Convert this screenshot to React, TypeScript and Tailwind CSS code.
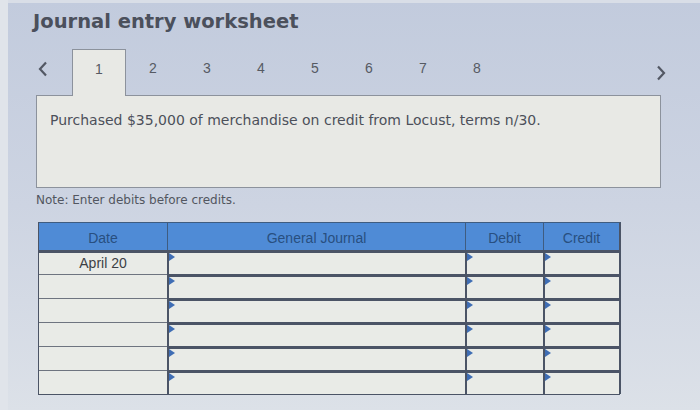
import React from "react";

const tabs = [1, 2, 3, 4, 5, 6, 7, 8];
const rows = ["April 20", "", "", "", "", ""];

function Flag() {
  return (
    <span className="absolute left-0 top-0 w-0 h-0 border-y-[4px] border-y-transparent border-l-[6px] border-l-[#3f6db4]" />
  );
}

function InputCell({ last }: { last?: boolean }) {
  return (
    <div
      className={`relative h-[24px] bg-[#e9ebe7] border-t-[3px] border-l-2 border-[#4b5466] ${last ? "border-r-2" : ""}`}
    >
      <Flag />
    </div>
  );
}

export default function App() {
  return (
    <div className="w-[700px] h-[410px] flex overflow-hidden bg-linear-to-b from-[#c2cbdd] via-[#cdd4e2] to-[#dce1e8] font-['DejaVu_Sans',sans-serif]">
      <div className="w-[8px] bg-[#e0e4ea]" />
      <div className="flex-1 flex flex-col border-t-[3px] border-[#d9dee7]">
        <h1 className="ml-[25px] mt-[7px] text-[19.5px] leading-[24px] font-bold text-[#4b505c]">
          Journal entry worksheet
        </h1>

        <div className="ml-[28px] mt-[15px] w-[627px] h-[46px] flex items-stretch">
          <div className="w-[36px] flex items-start pt-[12px] pl-[2px]">
            <svg width="10" height="16" viewBox="0 0 10 16">
              <polyline points="8,1.5 2,8 8,14.5" fill="none" stroke="#535864" strokeWidth="2.2" />
            </svg>
          </div>
          {tabs.map((t) => (
            <div
              key={t}
              className={`w-[54px] flex justify-center pt-[11px] text-[14px] leading-[16px] text-[#565a63] font-['Liberation_Sans',sans-serif] ${
                t === 1 ? "bg-[#e8e9e5] border-t border-x border-[#8c929c] relative z-10 -mb-px" : ""
              }`}
            >
              {t}
            </div>
          ))}
          <div className="flex-1 flex justify-end pt-[16px] -mr-[3px]">
            <svg width="10" height="16" viewBox="0 0 10 16">
              <polyline points="2,1.5 8,8 2,14.5" fill="none" stroke="#535864" strokeWidth="2.2" />
            </svg>
          </div>
        </div>

        <div className="ml-[28px] w-[625px] h-[93px] bg-[#e8e9e5] border border-[#8c929c] pt-[15px] pl-[13px]">
          <p className="text-[14px] leading-[18px] text-[#4c505a]">
            Purchased $35,000 of merchandise on credit from Locust, terms n/30.
          </p>
        </div>

        <p className="ml-[28px] mt-[5px] text-[12px] leading-[14px] text-[#525660]">
          Note: Enter debits before credits.
        </p>

        <div className="ml-[30px] mt-[15px] w-[582px] grid grid-cols-[128px_298px_78px_78px] border-l border-b border-[#4b5466] font-['Liberation_Sans',sans-serif]">
          {["Date", "General Journal", "Debit", "Credit"].map((h, i) => (
            <div
              key={h}
              className={`h-[28px] bg-[#4f8bd6] border-t border-[#3f5c80] flex items-center justify-center pt-[3px] text-[14px] text-[#284f80] ${
                i > 0 ? "border-l" : ""
              } ${i === 3 ? "border-r-2 border-r-[#4b5466]" : ""}`}
            >
              {h}
            </div>
          ))}
          {rows.map((d, r) => (
            <React.Fragment key={r}>
              <div
                className={`h-[24px] bg-[#e9ebe7] flex items-center justify-center text-[14px] text-[#3c3f45] ${
                  r > 0 ? "border-t border-[#6e7480]" : "border-t-[3px] border-[#4b5466]"
                }`}
              >
                {d}
              </div>
              <InputCell />
              <InputCell />
              <InputCell last />
            </React.Fragment>
          ))}
        </div>
      </div>
    </div>
  );
}
